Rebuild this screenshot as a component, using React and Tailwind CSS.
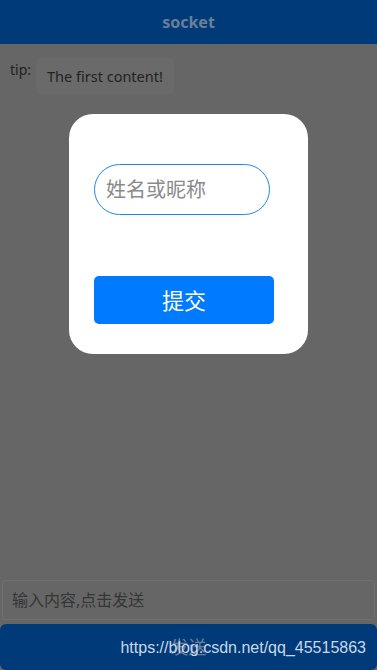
import React from 'react';

const font = { fontFamily: '"Noto Sans", "Noto Sans CJK SC", sans-serif' };

const App = () => {
  return (
    <div className="relative w-[377px] h-[670px] flex flex-col bg-[#666666] overflow-hidden" style={font}>
      <div className="h-[44px] bg-[#003a78] flex items-center justify-center">
        <span className="text-[16px] font-bold text-[#6b7f98]">socket</span>
      </div>

      <div className="flex-1 px-[10px] pt-[13px]">
        <div className="flex items-start gap-[5px]">
          <span className="text-[14px] text-[#222] mt-[2px]">tip:</span>
          <div className="bg-[#6a6a6a] rounded-[6px] px-[11px] py-[8px] text-[14.5px] text-[#222] leading-[22px]">
            The first content!
          </div>
        </div>
      </div>

      <div className="mx-[2px] mb-[4px] h-[40px] border border-[#707070] rounded-[4px] flex items-center px-[9px]">
        <span className="text-[16px] text-[#353535]">输入内容,点击发送</span>
      </div>
      <div className="relative h-[46px] bg-[#003a78] rounded-[6px] flex items-center justify-center">
        <span className="text-[18px] text-[#6b7f98]">发送</span>
        <span
          className="absolute right-[11px] bottom-[10px] text-[16px] text-[#c9d8ea]"
          style={{ fontFamily: '"Liberation Sans", Arial, sans-serif' }}
        >
          https://blog.csdn.net/qq_45515863
        </span>
      </div>

      <div className="absolute inset-0 flex justify-center pt-[114px]">
        <div className="w-[239px] h-[240px] bg-white rounded-[24px] flex flex-col pl-[25px] pt-[50px]">
          <div className="w-[176px] h-[51px] border border-[#1e88e5] rounded-full flex items-center px-[11px]">
            <span className="text-[20px] text-[#8a8a8a]">姓名或昵称</span>
          </div>
          <button className="mt-[61px] w-[180px] h-[48px] bg-[#007aff] rounded-[5px] text-white text-[22px]">
            提交
          </button>
        </div>
      </div>
    </div>
  );
};

export default App;
